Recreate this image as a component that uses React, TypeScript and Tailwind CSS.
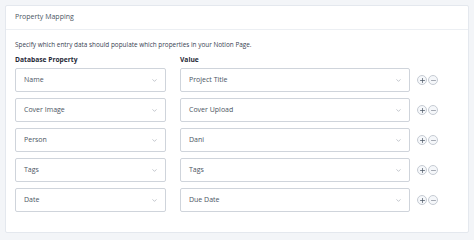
import { ChevronDown, Plus, Minus } from "lucide-react";

const rows = [
  { prop: "Name", value: "Project Title" },
  { prop: "Cover Image", value: "Cover Upload" },
  { prop: "Person", value: "Dani" },
  { prop: "Tags", value: "Tags" },
  { prop: "Date", value: "Due Date" },
];

function Select({ label, width }: { label: string; width: string }) {
  return (
    <div
      className={`${width} h-[24px] flex items-center justify-between pl-[8px] pr-[7px] border border-[#cfd4db] rounded-[2px] bg-white text-[7px] text-[#4b5563]`}
    >
      <span>{label}</span>
      <ChevronDown className="w-[7px] h-[7px] text-[#9aa1ab]" strokeWidth={2} />
    </div>
  );
}

export default function App() {
  return (
    <div
      className="w-[474px] h-[240px] bg-[#f3f5f8] p-[5px]"
      style={{ fontFamily: "'Open Sans', 'Noto Sans', sans-serif" }}
    >
      <div className="h-[228px] w-[464px] bg-white border border-[#e4e8ee] rounded-[2px]">
        {/* Header */}
        <div className="h-[24px] flex items-center px-[9px] border-b border-[#eceff3] text-[7px] text-[#4b5563]">
          Property Mapping
        </div>

        <div className="px-[9px] pt-[9px]">
          <p className="text-[6.4px] text-[#374151] leading-[12px]">
            Specify which entry data should populate which properties in your Notion Page.
          </p>

          <div className="flex gap-[14px] mt-[3px] text-[6.7px] font-bold text-[#1f2937] leading-[12px]">
            <div className="w-[151px]">Database Property</div>
            <div>Value</div>
          </div>

          <div className="flex flex-col gap-[6px] mt-[2px]">
            {rows.map((r) => (
              <div key={r.prop} className="flex items-center">
                <Select label={r.prop} width="w-[151px]" />
                <div className="w-[14px]" />
                <Select label={r.value} width="w-[230px]" />
                <div className="flex items-center gap-[1px] ml-[7px]">
                  <div className="w-[10px] h-[10px] rounded-full border border-[#c5cbd3] bg-[#f5f7fa] flex items-center justify-center text-[#4b5563]">
                    <Plus className="w-[7px] h-[7px]" strokeWidth={2.5} />
                  </div>
                  <div className="w-[10px] h-[10px] rounded-full border border-[#c5cbd3] bg-[#f5f7fa] flex items-center justify-center text-[#6b7280]">
                    <Minus className="w-[7px] h-[7px]" strokeWidth={2} />
                  </div>
                </div>
              </div>
            ))}
          </div>
        </div>
      </div>
    </div>
  );
}
